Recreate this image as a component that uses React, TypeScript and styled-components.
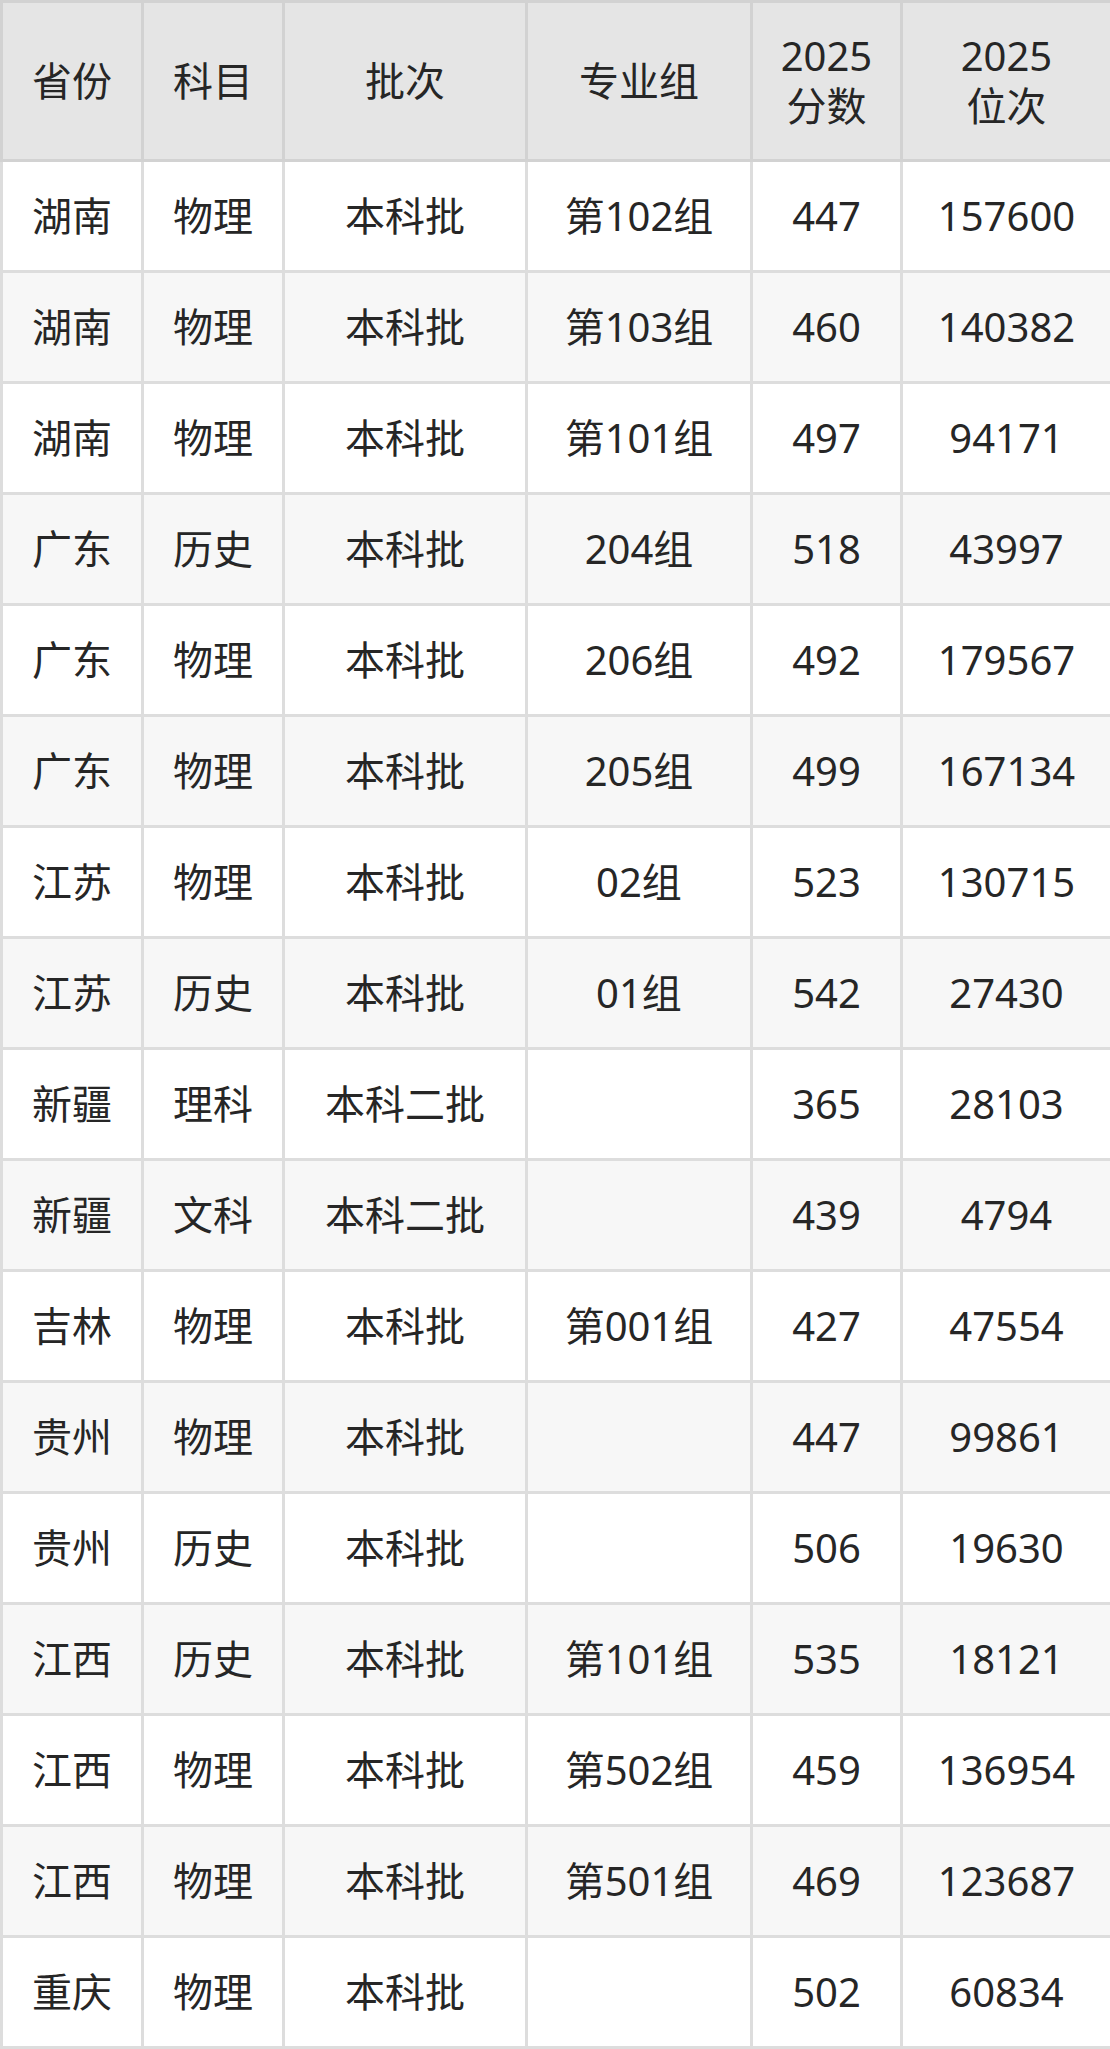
import styled, { createGlobalStyle } from 'styled-components'

const GlobalStyle = createGlobalStyle`
  html, body {
    margin: 0;
    padding: 0;
    background: #ffffff;
  }

  body {
    font-family: "Noto Sans", "Noto Sans CJK SC", sans-serif;
    color: #262626;
  }
`

type Row = {
  province: string
  subject: string
  batch: string
  group: string
  score: string
  rank: string
}

const rows: Row[] = [
  { province: '湖南', subject: '物理', batch: '本科批', group: '第102组', score: '447', rank: '157600' },
  { province: '湖南', subject: '物理', batch: '本科批', group: '第103组', score: '460', rank: '140382' },
  { province: '湖南', subject: '物理', batch: '本科批', group: '第101组', score: '497', rank: '94171' },
  { province: '广东', subject: '历史', batch: '本科批', group: '204组', score: '518', rank: '43997' },
  { province: '广东', subject: '物理', batch: '本科批', group: '206组', score: '492', rank: '179567' },
  { province: '广东', subject: '物理', batch: '本科批', group: '205组', score: '499', rank: '167134' },
  { province: '江苏', subject: '物理', batch: '本科批', group: '02组', score: '523', rank: '130715' },
  { province: '江苏', subject: '历史', batch: '本科批', group: '01组', score: '542', rank: '27430' },
  { province: '新疆', subject: '理科', batch: '本科二批', group: '', score: '365', rank: '28103' },
  { province: '新疆', subject: '文科', batch: '本科二批', group: '', score: '439', rank: '4794' },
  { province: '吉林', subject: '物理', batch: '本科批', group: '第001组', score: '427', rank: '47554' },
  { province: '贵州', subject: '物理', batch: '本科批', group: '', score: '447', rank: '99861' },
  { province: '贵州', subject: '历史', batch: '本科批', group: '', score: '506', rank: '19630' },
  { province: '江西', subject: '历史', batch: '本科批', group: '第101组', score: '535', rank: '18121' },
  { province: '江西', subject: '物理', batch: '本科批', group: '第502组', score: '459', rank: '136954' },
  { province: '江西', subject: '物理', batch: '本科批', group: '第501组', score: '469', rank: '123687' },
  { province: '重庆', subject: '物理', batch: '本科批', group: '', score: '502', rank: '60834' },
]

const columnWidths = [141, 141, 243, 225, 150, 210]

export default function App() {
  return (
    <>
      <GlobalStyle />
      <ScoreTable>
        <colgroup>
          {columnWidths.map((w, i) => (
            <col key={i} style={{ width: w }} />
          ))}
        </colgroup>
        <thead>
          <tr>
            <HeadCell>省份</HeadCell>
            <HeadCell>科目</HeadCell>
            <HeadCell>批次</HeadCell>
            <HeadCell>专业组</HeadCell>
            <HeadCell>2025<br />分数</HeadCell>
            <HeadCell>2025<br />位次</HeadCell>
          </tr>
        </thead>
        <tbody>
          {rows.map((row, i) => (
            <BodyRow key={i} $striped={i % 2 === 1}>
              <Cell>{row.province}</Cell>
              <Cell>{row.subject}</Cell>
              <Cell>{row.batch}</Cell>
              <Cell>{row.group}</Cell>
              <Cell>{row.score}</Cell>
              <Cell>{row.rank}</Cell>
            </BodyRow>
          ))}
        </tbody>
      </ScoreTable>
    </>
  )
}

const ScoreTable = styled.table`
  width: 1110px;
  table-layout: fixed;
  border-collapse: collapse;
  font-size: 40px;
`

const HeadCell = styled.th`
  height: 156px;
  padding: 0 4px;
  border: 3px solid #d2d2d2;
  background: #e5e5e5;
  font-weight: 400;
  line-height: 50px;
  text-align: center;
  vertical-align: middle;
`

const BodyRow = styled.tr<{ $striped: boolean }>`
  background: ${p => (p.$striped ? '#f7f7f7' : '#ffffff')};
`

const Cell = styled.td`
  height: 108px;
  padding: 0 4px;
  border: 3px solid #dddddd;
  line-height: 50px;
  text-align: center;
  vertical-align: middle;
  white-space: nowrap;
`
